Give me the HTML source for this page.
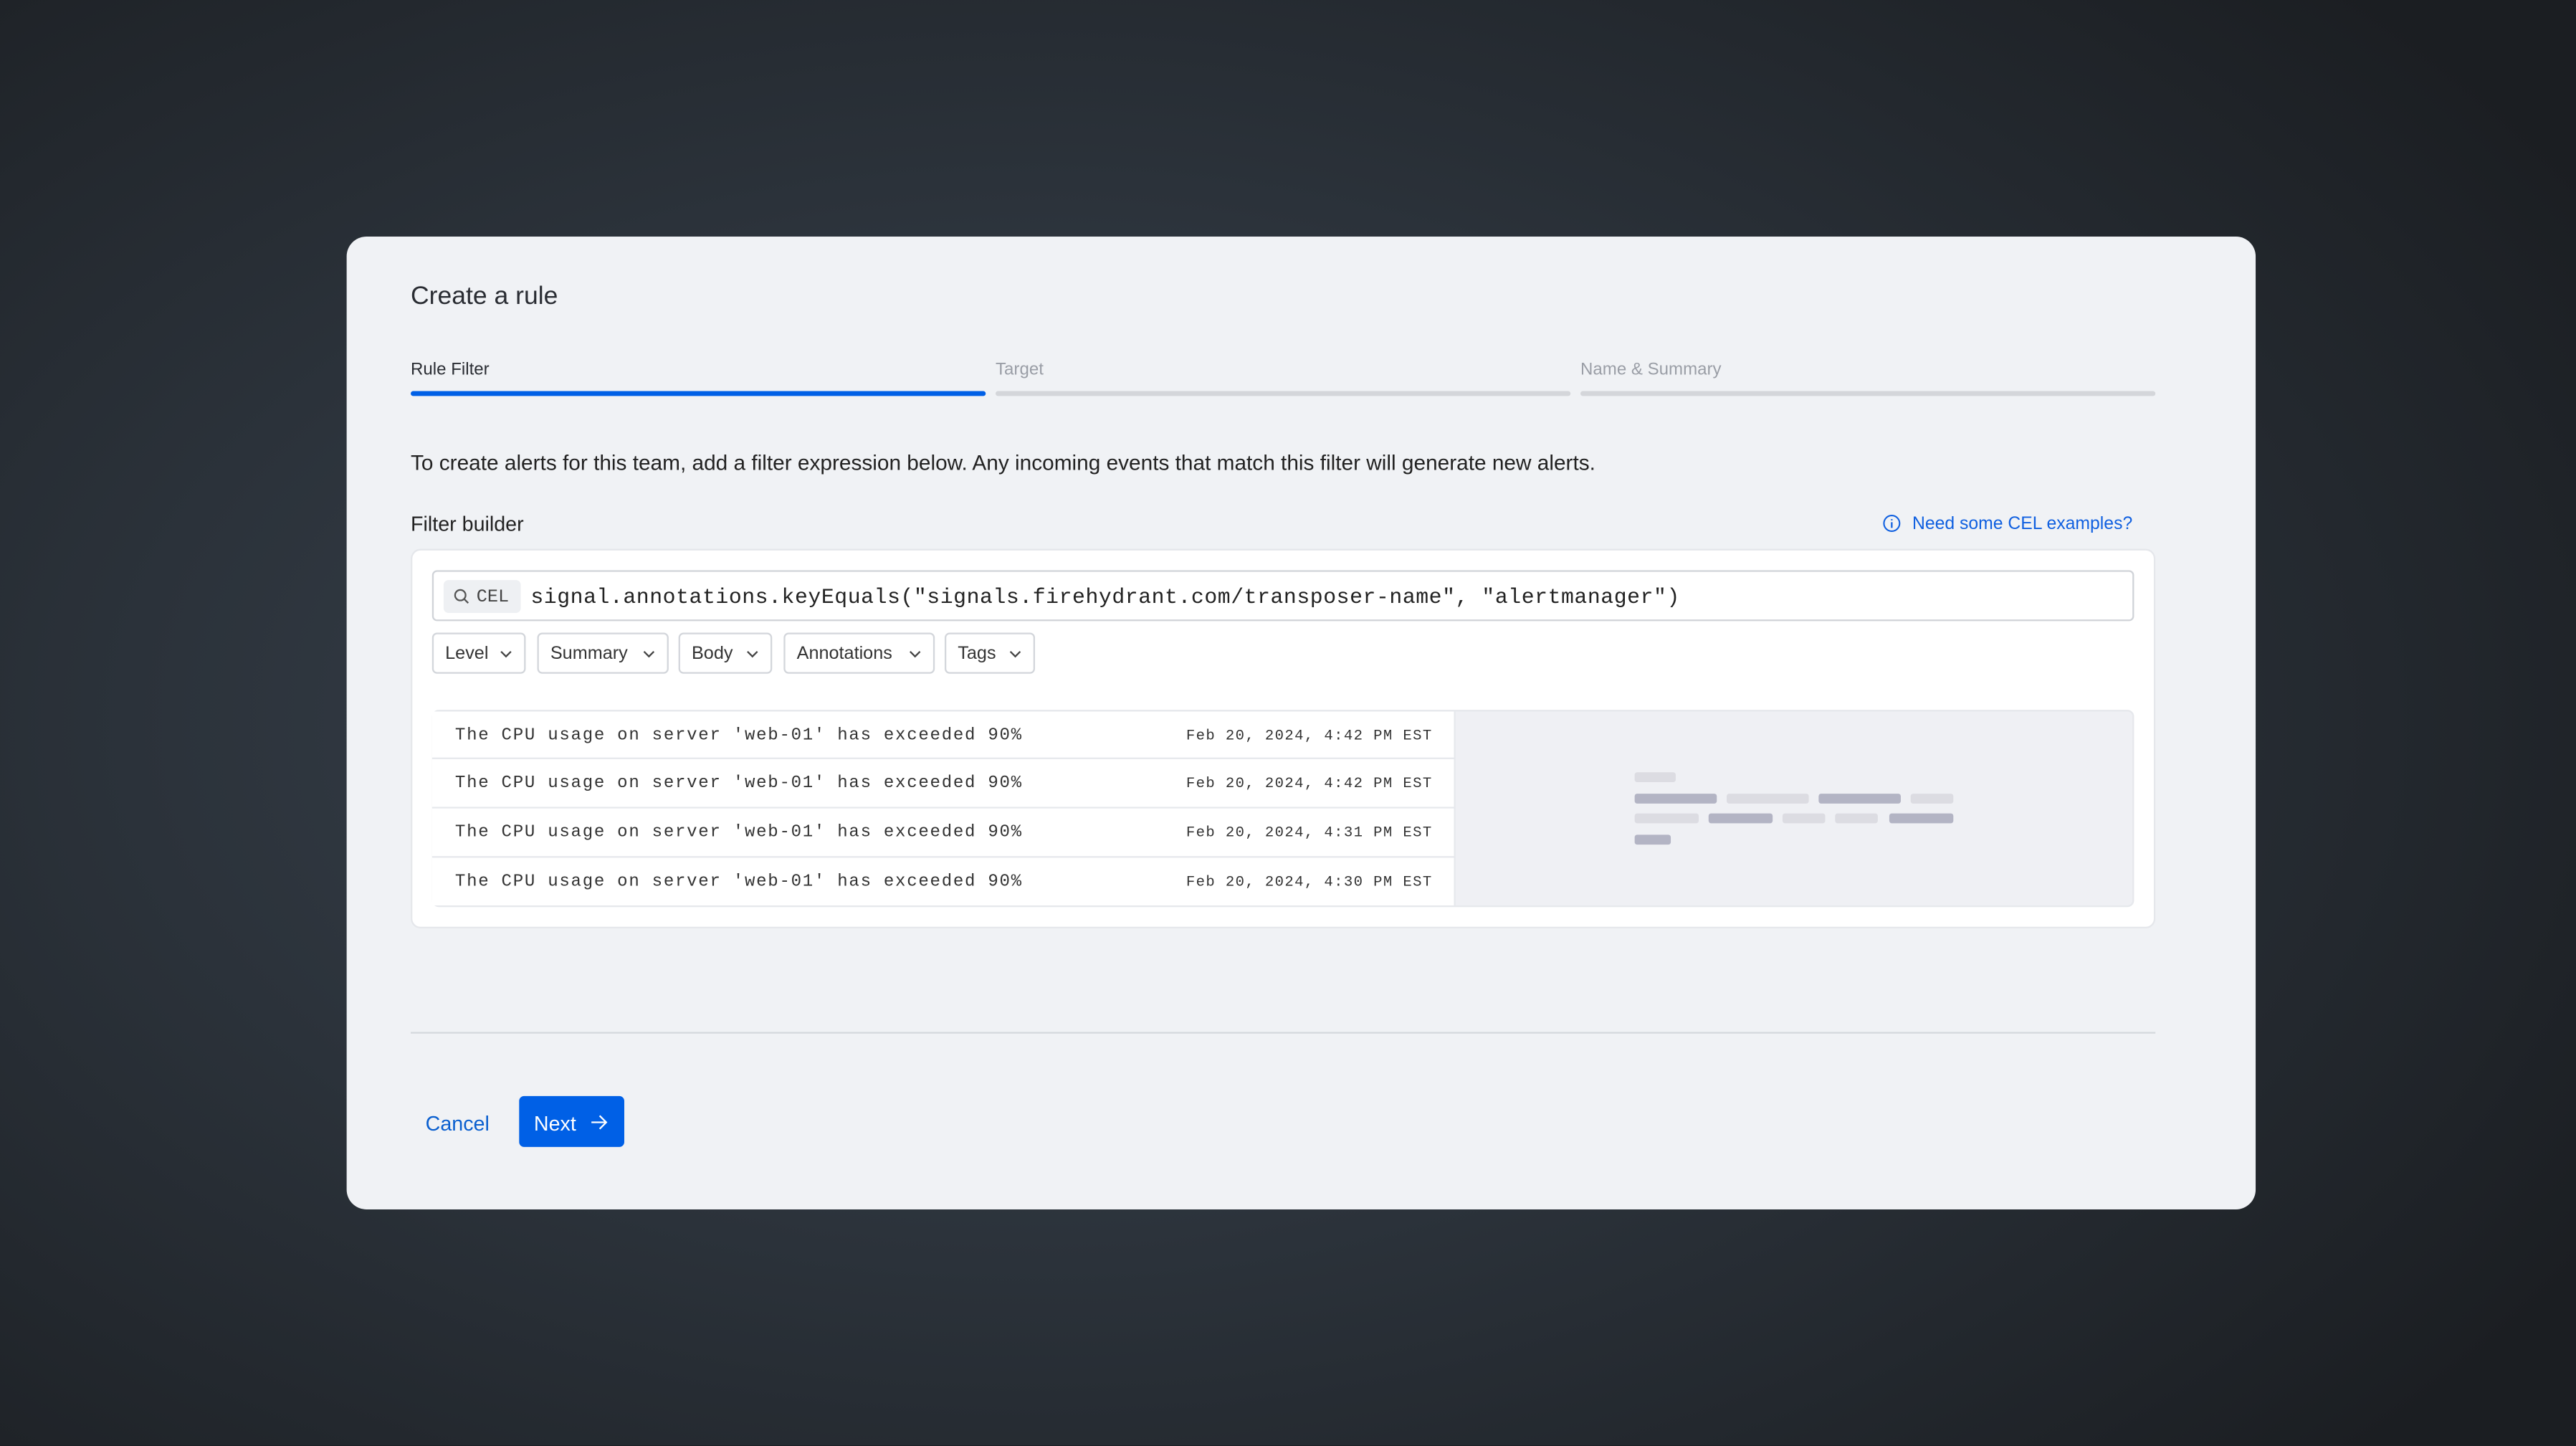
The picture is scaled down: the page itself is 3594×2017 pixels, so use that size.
<!DOCTYPE html>
<html><head><meta charset="utf-8"><style>
*{margin:0;padding:0;box-sizing:border-box}
html,body{width:3594px;height:2016px;overflow:hidden;background:#1c1f24}
#bg{position:absolute;left:0;top:0;width:3594px;height:2016px;background:radial-gradient(ellipse 70% 75% at 40% 50%,#3c4550 0%,#2b323a 50%,#1b1e22 100%)}
#s{position:absolute;left:0;top:0;width:1568px;height:880px;transform:scale(2.2921);transform-origin:0 0;font-family:"Liberation Sans",sans-serif}
.a{position:absolute}
.modal{left:211px;top:144px;width:1162px;height:592px;background:#f0f2f5;border-radius:12px}
.mono{font-family:"Liberation Mono",monospace}
.dd{position:absolute;top:385px;height:25px;border:1px solid #d3d6db;border-radius:3px;background:#fff;font-size:11px;color:#333;line-height:24px;padding-left:7px}
.dd svg{position:absolute;right:7px;top:9px}
.row{position:absolute;left:263px;width:622px;height:30px;border-bottom:1px solid #e6e8ec;background:#fff}
.row .t{position:absolute;left:14px;top:9px;font-size:10.5px;letter-spacing:0.75px;color:#333}
.row .d{position:absolute;right:13px;top:10px;font-size:9px;letter-spacing:0.6px;color:#333}
.sk{position:absolute;height:6px;border-radius:1.5px}
.k{background:#b3b4c4}.l{background:#dcdce2}
</style></head><body><div id="bg"></div>
<div id="s">
<div class="a modal"></div>
<div class="a" style="left:250px;top:172px;font-size:15.5px;color:#2a2d33">Create a rule</div>
<div class="a" style="left:250px;top:219px;font-size:10.5px;color:#2a2d33">Rule Filter</div>
<div class="a" style="left:606px;top:219px;font-size:10.5px;color:#9a9ea6">Target</div>
<div class="a" style="left:962px;top:219px;font-size:10.5px;color:#9a9ea6">Name &amp; Summary</div>
<div class="a" style="left:250px;top:238px;width:350px;height:3px;border-radius:2px;background:#0060e6"></div>
<div class="a" style="left:606px;top:238px;width:350px;height:3px;border-radius:2px;background:#d4d6da"></div>
<div class="a" style="left:962px;top:238px;width:350px;height:3px;border-radius:2px;background:#d4d6da"></div>
<div class="a" style="left:250px;top:274px;font-size:13px;color:#222">To create alerts for this team, add a filter expression below. Any incoming events that match this filter will generate new alerts.</div>
<div class="a" style="left:250px;top:312px;font-size:12.5px;color:#222">Filter builder</div>
<svg class="a" style="left:1146px;top:313px" width="11" height="11" viewBox="0 0 12 12"><circle cx="6" cy="6" r="5.2" fill="none" stroke="#1060e0" stroke-width="1"/><path d="M6 5.2V9M6 3.2v0.8" stroke="#1060e0" stroke-width="1.1"/></svg>
<div class="a" style="left:1164px;top:313px;font-size:10.8px;color:#1060e0">Need some CEL examples?</div>
<div class="a" style="left:250px;top:334px;width:1062px;height:231px;background:#fff;border:1px solid #e5e7eb;border-radius:6px"></div>
<div class="a" style="left:263px;top:347px;width:1036px;height:31px;border:1px solid #d0d3d8;border-radius:3px;background:#fff"></div>
<div class="a" style="left:270px;top:353px;width:47px;height:20px;background:#eef0f3;border-radius:3px"></div>
<svg class="a" style="left:276px;top:358px" width="10" height="10" viewBox="0 0 10 10"><circle cx="4.2" cy="4.2" r="3.2" fill="none" stroke="#555" stroke-width="1"/><path d="M6.6 6.6L9 9" stroke="#555" stroke-width="1"/></svg>
<div class="a mono" style="left:290px;top:358px;font-size:11px;color:#444">CEL</div>
<div class="a mono" style="left:323px;top:356px;font-size:13px;letter-spacing:0.24px;color:#222">signal.annotations.keyEquals("signals.firehydrant.com/transposer-name", "alertmanager")</div>
<div class="dd" style="left:263px;width:57px">Level<svg width="8" height="6" viewBox="0 0 8 6"><path d="M1 1.5l3 3 3-3" fill="none" stroke="#444"/></svg></div>
<div class="dd" style="left:327px;width:80px">Summary<svg width="8" height="6" viewBox="0 0 8 6"><path d="M1 1.5l3 3 3-3" fill="none" stroke="#444"/></svg></div>
<div class="dd" style="left:413px;width:57px">Body<svg width="8" height="6" viewBox="0 0 8 6"><path d="M1 1.5l3 3 3-3" fill="none" stroke="#444"/></svg></div>
<div class="dd" style="left:477px;width:92px">Annotations<svg width="8" height="6" viewBox="0 0 8 6"><path d="M1 1.5l3 3 3-3" fill="none" stroke="#444"/></svg></div>
<div class="dd" style="left:575px;width:55px">Tags<svg width="8" height="6" viewBox="0 0 8 6"><path d="M1 1.5l3 3 3-3" fill="none" stroke="#444"/></svg></div>
<div class="a" style="left:263px;top:432px;width:1036px;height:120px;border:1px solid #e6e8ec;border-radius:4px;background:#eff0f4;overflow:hidden"></div>
<div class="row mono" style="top:433px;height:29px"><span class="t">The CPU usage on server 'web-01' has exceeded 90%</span><span class="d">Feb 20, 2024, 4:42 PM EST</span></div>
<div class="row mono" style="top:462px"><span class="t">The CPU usage on server 'web-01' has exceeded 90%</span><span class="d">Feb 20, 2024, 4:42 PM EST</span></div>
<div class="row mono" style="top:492px"><span class="t">The CPU usage on server 'web-01' has exceeded 90%</span><span class="d">Feb 20, 2024, 4:31 PM EST</span></div>
<div class="row mono" style="top:522px;height:29px;border-bottom:none"><span class="t">The CPU usage on server 'web-01' has exceeded 90%</span><span class="d">Feb 20, 2024, 4:30 PM EST</span></div>
<div class="a" style="left:885px;top:433px;width:1px;height:118px;background:#e6e8ec"></div>
<div class="sk l" style="left:995px;top:470px;width:25px"></div>
<div class="sk k" style="left:995px;top:483px;width:50px"></div>
<div class="sk l" style="left:1051px;top:483px;width:50px"></div>
<div class="sk k" style="left:1107px;top:483px;width:50px"></div>
<div class="sk l" style="left:1163px;top:483px;width:26px"></div>
<div class="sk l" style="left:995px;top:495px;width:39px"></div>
<div class="sk k" style="left:1040px;top:495px;width:39px"></div>
<div class="sk l" style="left:1085px;top:495px;width:26px"></div>
<div class="sk l" style="left:1117px;top:495px;width:26px"></div>
<div class="sk k" style="left:1150px;top:495px;width:39px"></div>
<div class="sk k" style="left:995px;top:508px;width:22px"></div>
<div class="a" style="left:250px;top:628px;width:1062px;height:1px;background:#d5d8dd"></div>
<div class="a" style="left:259px;top:677px;font-size:12.5px;color:#0a5fcf">Cancel</div>
<div class="a" style="left:316px;top:667px;width:64px;height:31px;background:#0060e6;border-radius:3px"></div>
<div class="a" style="left:325px;top:677px;font-size:12.5px;color:#fff">Next</div>
<svg class="a" style="left:359px;top:678px" width="11" height="10" viewBox="0 0 11 10"><path d="M1 5h9M6 1l4 4-4 4" fill="none" stroke="#fff" stroke-width="1"/></svg>
</div>
</body></html>
